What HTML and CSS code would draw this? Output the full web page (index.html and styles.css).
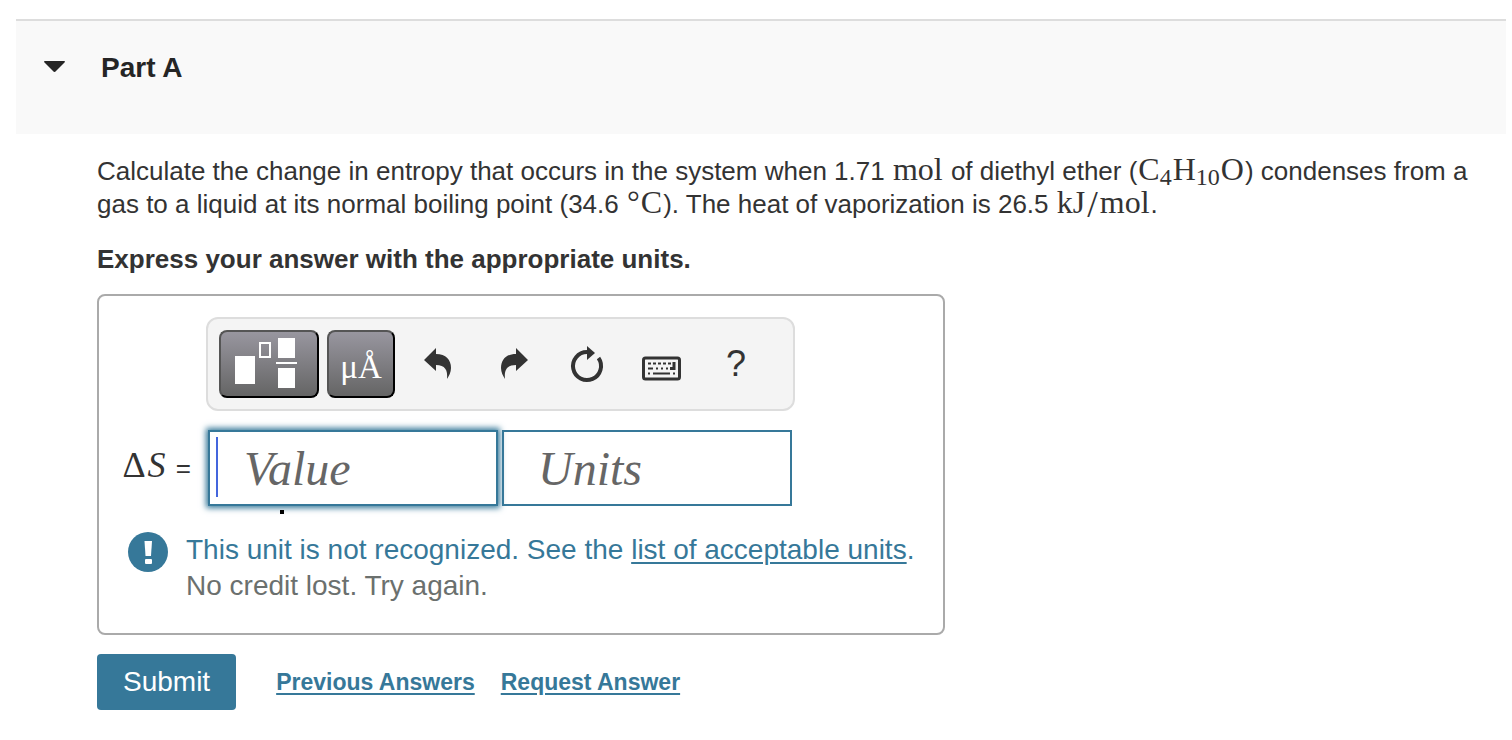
FILE: index.html
```html
<!DOCTYPE html>
<html lang="en">
<head>
    <meta charset="UTF-8">
    <meta name="viewport" content="width=device-width, initial-scale=1.0">
    <title>Part A</title>
    <link rel="stylesheet" href="styles.css">
</head>
<body>
    <header class="part-header">
        <button class="collapse-btn" type="button" aria-label="Collapse Part A">
            <svg width="22" height="14" viewBox="0 0 22 14"><path d="M1 1H20Q22 1 20 3L12 11Q10.500 13 9 11L1 3Q-1 1 1 1Z" fill="#252525"/></svg>
        </button>
        <h1>Part A</h1>
    </header>

    <main class="part-body">
        <p class="question">Calculate the change in entropy that occurs in the system when 1.71 <span class="math">mol</span> of diethyl ether (<span class="math">C<sub>4</sub>H<sub>10</sub>O</span>) condenses from a gas to a liquid at its normal boiling point (34.6 <span class="math"><span class="degree">°</span>C</span>). The heat of vaporization is 26.5 <span class="math">kJ<span class="slash">/</span>mol</span>.</p>
        <p class="instructions">Express your answer with the appropriate units.</p>

        <form class="answer-form">
            <div class="answer-box">
                <div class="toolbar" role="toolbar" aria-label="Answer tools">
                    <button class="palette-btn templates" type="button" aria-label="Templates">
                        <svg width="96" height="64" viewBox="0 0 96 64" fill="#fff">
                            <rect x="14" y="24" width="20" height="28"/>
                            <rect x="39" y="11" width="10" height="14" fill="none" stroke="#fff" stroke-width="2"/>
                            <rect x="57" y="6" width="17" height="20"/>
                            <rect x="55" y="30" width="21" height="2"/>
                            <rect x="57" y="36" width="17" height="20"/>
                        </svg>
                    </button>
                    <button class="palette-btn symbols" type="button" aria-label="Symbols">μÅ</button>
                    <div class="tools">
                        <button class="tool-btn" type="button" aria-label="Undo">
                            <svg width="40" height="40" viewBox="2 0 40 40"><path d="M6 16L18 4V10C28 10 33 16 33 24C33 28 31 32 29 35C30 26 27 21 18 21V27Z" fill="#333"/></svg>
                        </button>
                        <button class="tool-btn" type="button" aria-label="Redo">
                            <svg width="40" height="40" viewBox="1 0 40 40"><path d="M35 16L23 4V10C13 10 8 16 8 24C8 28 10 32 12 35C11 26 14 21 23 21V27Z" fill="#333"/></svg>
                        </button>
                        <button class="tool-btn" type="button" aria-label="Reset">
                            <svg width="40" height="40" viewBox="1 0 40 40"><path d="M20 8A14 14 0 1 0 31.500 14" fill="none" stroke="#333" stroke-width="4"/><path d="M20 2L28 9L20 16Z" fill="#333"/></svg>
                        </button>
                        <button class="tool-btn" type="button" aria-label="Keyboard shortcuts">
                            <svg width="40" height="40" viewBox="1 0 40 40">
                                <rect x="2.500" y="14" width="36" height="21" rx="2" fill="none" stroke="#333" stroke-width="3"/>
                                <path d="M7 19.500H10M12 19.500H15M17 19.500H20M22 19.500H25M27 19.500H30M7 24.500H12M15 24.500H17M20 24.500H22M25 24.500H27M7 29.500H9M12 29.500H29M32 29.500H34" stroke="#333" stroke-width="2"/>
                                <path d="M33 18V24.500H29" fill="none" stroke="#333" stroke-width="3"/>
                            </svg>
                        </button>
                        <button class="tool-btn help" type="button" aria-label="Help">?</button>
                    </div>
                </div>

                <label class="answer-label" for="value"><span class="math">Δ<i>S</i></span> =</label>
                <div class="fields">
                    <div class="value-field">
                        <input class="field active" id="value" type="text" placeholder="Value">
                        <span class="caret"></span>
                        <span class="dot"></span>
                    </div>
                    <input class="field" type="text" placeholder="Units" aria-label="Units">
                </div>

                <div class="feedback">
                    <svg class="feedback-icon" width="40" height="40" viewBox="0 0 40 40"><circle cx="20" cy="20" r="20" fill="#367899"/><path d="M16.500 9H24L23 24H17.500Z" fill="#fff"/><rect x="17" y="27" width="7" height="5" rx="1" fill="#fff"/></svg>
                    <div>
                        <p class="feedback-error">This unit is not recognized. See the <a href="#">list of acceptable units</a>.</p>
                        <p class="feedback-note">No credit lost. Try again.</p>
                    </div>
                </div>
            </div>

            <div class="actions">
                <button class="submit-btn" type="submit">Submit</button>
                <a href="#">Previous Answers</a>
                <a href="#">Request Answer</a>
            </div>
        </form>
    </main>
</body>
</html>
```
FILE: styles.css
```css
* {
    margin: 0;
    padding: 0;
    box-sizing: border-box;
}

body {
    font-family: "Liberation Sans", Arial, sans-serif;
    font-size: 26px;
    line-height: 33px;
    color: #333;
    background: #fff;
    padding: 19px 6px 24px 16px;
}

button {
    font-family: inherit;
    border: none;
    background: none;
    cursor: pointer;
}

svg {
    display: block;
}

a {
    color: #367899;
    text-underline-offset: 3px;
    text-decoration-thickness: 2px;
}

/* Header */
.part-header {
    display: flex;
    align-items: center;
    gap: 35px;
    padding: 30px 28px 50px;
    border-top: 2px solid #ddd;
    background: #f9f9f9;
}

.collapse-btn {
    padding-bottom: 2px;
}

h1 {
    font-size: 28px;
    line-height: 33px;
    color: #252525;
}

/* Question */
.part-body {
    padding: 21px 30px 0 81px;
}

.math {
    padding: 0 1px;
    font-family: "Liberation Serif", "Times New Roman", serif;
    font-size: 32px;
    line-height: 1px;
}

.math sub {
    margin-right: 1px;
    font-size: 24px;
    line-height: 1px;
    vertical-align: -5px;
}

.degree {
    margin-right: 1px;
}

.slash {
    margin: 0 2px;
    font-size: 38px;
    vertical-align: -4px;
}

.instructions {
    margin: 22px 0 18px;
    font-weight: bold;
}

/* Answer box */
.answer-box {
    display: grid;
    grid-template-columns: 92px 1fr;
    align-items: center;
    column-gap: 17px;
    max-width: 848px;
    padding: 21px 22px 29px 0;
    border: 2px solid #aaa;
    border-radius: 8px;
}

.toolbar {
    grid-column: 2;
    justify-self: start;
    display: flex;
    gap: 8px;
    margin: 0 0 19px -2px;
    padding: 11px;
    width: 589px;
    border: 2px solid #ddd;
    border-radius: 12px;
    background: #f4f4f4;
}

.palette-btn {
    display: flex;
    align-items: center;
    justify-content: center;
    height: 68px;
    border: 2px solid;
    border-color: #555 #000 #000 #555;
    border-radius: 8px;
    background: linear-gradient(#98969f, #656565);
    color: #fff;
}

.templates {
    width: 100px;
}

.symbols {
    width: 68px;
    padding-top: 6px;
    font-family: "Liberation Serif", "Times New Roman", serif;
    font-size: 33px;
}

.tools {
    display: flex;
}

.tool-btn {
    display: flex;
    align-items: center;
    justify-content: center;
    width: 74px;
    color: #333;
}

.help {
    font-size: 36px;
}

.answer-label {
    justify-self: end;
    white-space: nowrap;
}

.answer-label .math {
    font-size: 36px;
}

.answer-label i {
    margin: 0 2px;
}

.fields {
    display: flex;
    gap: 4px;
}

.value-field {
    position: relative;
}

.field {
    display: block;
    width: 290px;
    height: 76px;
    padding: 0 34px;
    border: 2px solid #367899;
    font-family: "Liberation Serif", "Times New Roman", serif;
    font-size: 48px;
    font-style: italic;
    color: #333;
}

.field::placeholder {
    color: #666;
    opacity: 1;
}

.active {
    box-shadow: 0 0 6px 2px #367899;
}

.caret {
    position: absolute;
    left: 8px;
    top: 7px;
    width: 2px;
    height: 60px;
    background: #4466dd;
}

.dot {
    position: absolute;
    left: 72px;
    top: 80px;
    width: 4px;
    height: 4px;
    background: #000;
}

/* Feedback */
.feedback {
    grid-column: 1 / -1;
    display: flex;
    gap: 18px;
    margin: 26px 0 0 29px;
    font-size: 28px;
    line-height: 36px;
}

.feedback-icon {
    flex: none;
}

.feedback-error {
    color: #367899;
}

.feedback-note {
    color: #6b706e;
}

/* Actions */
.actions {
    display: flex;
    align-items: center;
    gap: 26px;
    margin-top: 19px;
    font-size: 23px;
    font-weight: bold;
}

.submit-btn {
    margin-right: 14px;
    padding: 12px 26px;
    border-radius: 4px;
    background: #367899;
    color: #fff;
    font-size: 28px;
    line-height: 32px;
}
```
